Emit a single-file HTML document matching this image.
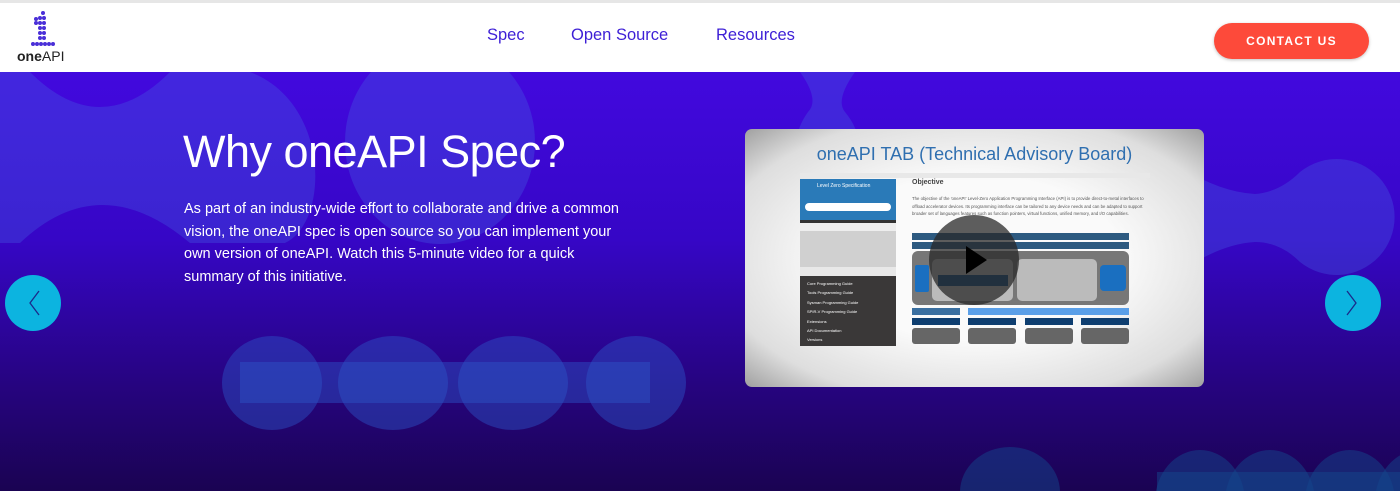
<!DOCTYPE html>
<html><head><meta charset="utf-8"><style>
*{margin:0;padding:0;box-sizing:border-box}
html,body{width:1400px;height:491px;overflow:hidden}
body{font-family:"Liberation Sans",sans-serif;background:#fff;position:relative}
.top{position:absolute;left:0;top:0;width:1400px;height:3px;background:#e6e6e6}
header{position:absolute;top:3px;left:0;width:1400px;height:69px;background:#fff}
.nav a{position:absolute;top:23px;font-size:16.5px;color:#3d1fd6;text-decoration:none}
.btn{position:absolute;left:1214px;top:20px;width:155px;height:36px;border-radius:18px;background:#fd4a3a;color:#fff;font-size:12px;font-weight:bold;letter-spacing:1.3px;text-align:center;line-height:36px;box-shadow:0 1px 3px rgba(0,0,0,.25)}
.hero{position:absolute;top:72px;left:0;width:1400px;height:419px;background:linear-gradient(#4209de 0%,#3606c6 40%,#26047f 75%,#1a0352 100%);overflow:hidden}
h1{position:absolute;left:183px;top:126px;color:#fff;font-weight:300;font-size:45px;letter-spacing:-.5px}
p.t{position:absolute;left:184px;top:198px;color:#fff;font-size:14.5px;line-height:22.5px;white-space:nowrap}
.arr{position:absolute;top:275px;width:56px;height:56px;border-radius:50%;background:#0cb4e0}
.vid{position:absolute;left:745px;top:129px;width:459px;height:258px;border-radius:7px;background:radial-gradient(ellipse at center,#fafafa 45%,#dedede 80%,#a0a0a0 100%);overflow:hidden}
.s{position:absolute;font-size:4px;color:#fff}
</style></head><body>
<div class="top"></div>
<header>
<svg style="position:absolute;left:28px;top:6px" width="30" height="42" viewBox="0 0 30 42">
<g fill="#4a2fd8">
<circle cx="15" cy="4" r="2"/>
<circle cx="8" cy="10" r="2"/><circle cx="12" cy="9" r="2"/><circle cx="16" cy="9" r="2"/>
<circle cx="12" cy="14" r="2"/><circle cx="16" cy="14" r="2"/><circle cx="8" cy="14" r="2"/>
<circle cx="12" cy="19" r="2"/><circle cx="16" cy="19" r="2"/>
<circle cx="12" cy="24" r="2"/><circle cx="16" cy="24" r="2"/>
<circle cx="12" cy="29" r="2"/><circle cx="16" cy="29" r="2"/>
<circle cx="5" cy="35" r="2"/><circle cx="9" cy="35" r="2"/><circle cx="13" cy="35" r="2"/><circle cx="17" cy="35" r="2"/><circle cx="21" cy="35" r="2"/><circle cx="25" cy="35" r="2"/>
</g></svg>
<div style="position:absolute;left:17px;top:45px;font-size:14px;color:#222"><b>one</b>API</div>
<div class="nav"><a style="left:487px">Spec</a><a style="left:571px">Open Source</a><a style="left:716px">Resources</a></div>
<div class="btn">CONTACT US</div>
</header>
<div class="hero">
<svg width="1400" height="419" style="position:absolute;left:0;top:0">
<g fill="rgba(70,95,225,0.35)">
<path d="M0 0 H30 Q100 70 170 0 H250 C330 30 330 150 285 171 H190 Q100 95 20 171 H0 Z"/>
<ellipse cx="440" cy="70" rx="95" ry="102"/>
<path d="M800 0 H855 Q835 28 845 40 Q860 58 860 80 H795 Q795 58 808 40 Q820 28 800 0 Z"/>
<path d="M1180 95 Q1220 120 1255 122 Q1280 120 1300 100 A58 58 0 1 1 1300 190 Q1280 170 1255 170 Q1220 172 1180 200 Z"/>
</g>
<g fill="rgba(45,85,200,0.45)">
<ellipse cx="272" cy="311" rx="50" ry="47"/>
<ellipse cx="393" cy="311" rx="55" ry="47"/>
<ellipse cx="513" cy="311" rx="55" ry="47"/>
<ellipse cx="636" cy="311" rx="50" ry="47"/>
<rect x="240" y="290" width="410" height="41"/>
</g>
<g fill="rgba(20,70,140,0.5)">
<ellipse cx="1010" cy="420" rx="50" ry="45"/>
<ellipse cx="1200" cy="430" rx="45" ry="52"/>
<ellipse cx="1270" cy="430" rx="45" ry="52"/>
<ellipse cx="1350" cy="430" rx="45" ry="52"/>
<ellipse cx="1420" cy="430" rx="45" ry="52"/>
<rect x="1157" y="400" width="260" height="30"/>
</g>
</svg>
</div>
<h1>Why oneAPI Spec?</h1>
<p class="t">As part of an industry-wide effort to collaborate and drive a common<br>vision, the oneAPI spec is open source so you can implement your<br>own version of oneAPI. Watch this 5-minute video for a quick<br>summary of this initiative.</p>
<div class="arr" style="left:5px"><svg width="56" height="56"><path d="M34 16 L25 28 L34 40" stroke="#1a2a8a" stroke-width="1.3" fill="none"/></svg></div>
<div class="arr" style="left:1325px"><svg width="56" height="56"><path d="M22 16 L31 28 L22 40" stroke="#1a2a8a" stroke-width="1.3" fill="none"/></svg></div>
<div class="vid">
<div style="position:absolute;left:0;width:459px;top:15px;text-align:center;color:#2f6fb0;font-size:18px">oneAPI TAB (Technical Advisory Board)</div>
<div style="position:absolute;left:55px;top:44px;width:350px;height:5px;background:#e8e8e8"></div>
<div style="position:absolute;left:55px;top:50px;width:96px;height:41px;background:#2a7ab8"></div>
<div class="s" style="left:72px;top:54px;font-size:5px">Level Zero Specification</div>
<div style="position:absolute;left:60px;top:74px;width:86px;height:8px;border-radius:4px;background:#fff"></div>
<div style="position:absolute;left:55px;top:91px;width:96px;height:3px;background:#333"></div>
<div style="position:absolute;left:55px;top:94px;width:96px;height:8px;background:#eee"></div>
<div style="position:absolute;left:55px;top:102px;width:96px;height:36px;background:#d0d0d0"></div>
<div style="position:absolute;left:55px;top:138px;width:96px;height:9px;background:#e8e8e8"></div>
<div style="position:absolute;left:55px;top:147px;width:96px;height:70px;background:#3a3838"></div>
<div class="s" style="left:62px;top:150px;line-height:9.4px">Core Programming Guide<br>Tools Programming Guide<br>Sysman Programming Guide<br>SPIR-V Programming Guide<br>Extensions<br>API Documentation<br>Versions</div>
<div style="position:absolute;left:167px;top:50px;font-size:7px;font-weight:bold;color:#444">Objective</div>
<div style="position:absolute;left:167px;top:66px;width:235px;font-size:4.3px;line-height:7.6px;color:#555">The objective of the 'oneAPI' Level-Zero Application Programming Interface (API) is to provide direct-to-metal interfaces to offload accelerator devices. Its programming interface can be tailored to any device needs and can be adapted to support broader set of languages features such as function pointers, virtual functions, unified memory, and I/O capabilities.</div>
<div style="position:absolute;left:167px;top:104px;width:217px;height:7px;background:#2d5a80"></div>
<div style="position:absolute;left:167px;top:113px;width:217px;height:7px;background:#2d5a80"></div>
<div style="position:absolute;left:167px;top:122px;width:217px;height:54px;border-radius:6px;background:#777"></div>
<div style="position:absolute;left:170px;top:136px;width:14px;height:27px;border-radius:2px;background:#1a6fc0"></div>
<div style="position:absolute;left:187px;top:130px;width:81px;height:42px;border-radius:5px;background:#bbb"></div>
<div style="position:absolute;left:272px;top:130px;width:80px;height:42px;border-radius:5px;background:#bbb"></div>
<div style="position:absolute;left:355px;top:136px;width:26px;height:26px;border-radius:4px;background:#1a6fc0"></div>
<div style="position:absolute;left:193px;top:146px;width:70px;height:11px;background:#0e4a80"></div>
<div style="position:absolute;left:167px;top:179px;width:48px;height:7px;background:#3a6fa0"></div>
<div style="position:absolute;left:223px;top:179px;width:161px;height:7px;background:#5a9fe8"></div>
<div style="position:absolute;left:167px;top:189px;width:48px;height:7px;background:#0e3e70"></div>
<div style="position:absolute;left:223px;top:189px;width:48px;height:7px;background:#0e3e70"></div>
<div style="position:absolute;left:280px;top:189px;width:48px;height:7px;background:#0e3e70"></div>
<div style="position:absolute;left:336px;top:189px;width:48px;height:7px;background:#0e3e70"></div>
<div style="position:absolute;left:167px;top:199px;width:48px;height:16px;border-radius:3px;background:#666"></div>
<div style="position:absolute;left:223px;top:199px;width:48px;height:16px;border-radius:3px;background:#666"></div>
<div style="position:absolute;left:280px;top:199px;width:48px;height:16px;border-radius:3px;background:#666"></div>
<div style="position:absolute;left:336px;top:199px;width:48px;height:16px;border-radius:3px;background:#666"></div>
<div style="position:absolute;left:184px;top:86px;width:90px;height:90px;border-radius:50%;background:rgba(40,40,40,.75)"></div>
<svg style="position:absolute;left:184px;top:86px" width="90" height="90"><path d="M37 31 L37 59 L58 45 Z" fill="#000"/></svg>
</div>
</body></html>
